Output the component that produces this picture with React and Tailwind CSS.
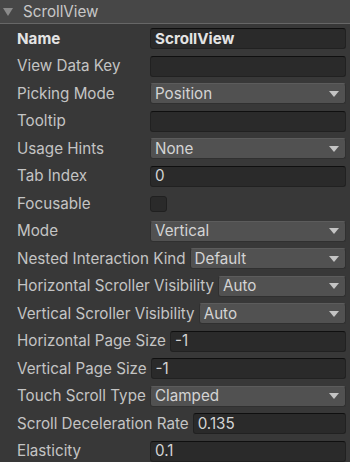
import React from 'react';

const rows = [
  { label: 'Name', kind: 'text', value: 'ScrollView', bold: true },
  { label: 'View Data Key', kind: 'text', value: '' },
  { label: 'Picking Mode', kind: 'select', value: 'Position' },
  { label: 'Tooltip', kind: 'text', value: '' },
  { label: 'Usage Hints', kind: 'select', value: 'None' },
  { label: 'Tab Index', kind: 'text', value: '0' },
  { label: 'Focusable', kind: 'check' },
  { label: 'Mode', kind: 'select', value: 'Vertical' },
  { label: 'Nested Interaction Kind', kind: 'select', value: 'Default' },
  { label: 'Horizontal Scroller Visibility', kind: 'select', value: 'Auto' },
  { label: 'Vertical Scroller Visibility', kind: 'select', value: 'Auto' },
  { label: 'Horizontal Page Size', kind: 'text', value: '-1' },
  { label: 'Vertical Page Size', kind: 'text', value: '-1' },
  { label: 'Touch Scroll Type', kind: 'select', value: 'Clamped' },
  { label: 'Scroll Deceleration Rate', kind: 'text', value: '0.135' },
  { label: 'Elasticity', kind: 'text', value: '0.1' },
];

const Arrow = () => (
  <svg width="10" height="6" viewBox="0 0 10 6" className="shrink-0">
    <path d="M0 0 H10 L5 6 Z" fill="#c4c4c4" />
  </svg>
);

const Field = ({ row }) => {
  if (row.kind === 'check') {
    return (
      <div className="flex-1 flex items-center">
        <div className="w-[17px] h-[16px] rounded-[3px] bg-[#2a2a2a] border border-[#202020]" />
      </div>
    );
  }
  if (row.kind === 'select') {
    return (
      <div className="flex-1 min-w-0 h-[21px] flex items-center justify-between pl-[4px] pr-[6px] rounded-[3px] bg-[#515151] border border-[#303030] border-t-[#5c5c5c]">
        <span className="whitespace-nowrap text-[#d4d4d4]">{row.value}</span>
        <Arrow />
      </div>
    );
  }
  return (
    <div className="flex-1 min-w-0 h-[21px] flex items-center pl-[4px] rounded-[3px] bg-[#2a2a2a] border border-[#212121] border-t-[#0f0f0f]">
      <span className={row.bold ? 'font-bold text-[#e4e4e4]' : 'text-[#d4d4d4]'}>{row.value}</span>
    </div>
  );
};

export default function App() {
  return (
    <div className="w-[350px] h-[462px] overflow-hidden bg-[#383838] text-[15.2px] leading-[18px]" style={{ fontFamily: 'Inter, "Noto Sans", sans-serif' }}>
      <div className="h-[23px] flex items-center bg-[#474747] border-b border-[#676767] box-content">
        <svg width="10" height="8" viewBox="0 0 10 8" className="ml-[3px] mr-[10px]">
          <path d="M0 0 H10 L5 8 Z" fill="#8a8a8a" />
        </svg>
        <span className="text-[#c8c8c8]">ScrollView</span>
      </div>
      <div className="pt-[1px]">
        {rows.map((row) => (
          <div key={row.label} className="h-[27.5px] flex items-center pl-[17px] pr-[4px]">
            <div className={`min-w-[133px] pr-[4px] whitespace-nowrap ${row.bold ? 'font-bold text-[#e4e4e4]' : 'text-[#c4c4c4]'}`}>
              {row.label}
            </div>
            <Field row={row} />
          </div>
        ))}
      </div>
    </div>
  );
}
